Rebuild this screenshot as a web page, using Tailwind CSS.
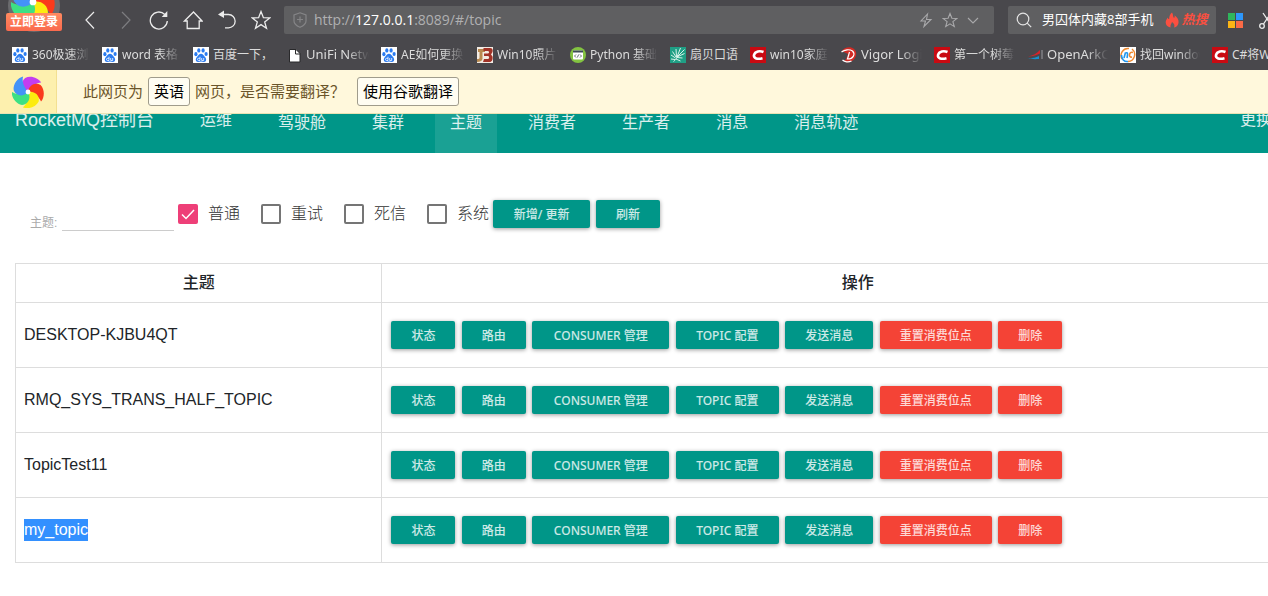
<!DOCTYPE html>
<html lang="zh-CN">
<head>
<meta charset="utf-8">
<title>RocketMQ控制台</title>
<script src="https://cdn.jsdelivr.net/npm/@tailwindcss/browser@4"></script>
</head>
<body class="min-h-screen overflow-x-hidden bg-white font-['Open_Sans','Noto_Sans_CJK_SC',sans-serif]">

<svg class="hidden" aria-hidden="true">
  <symbol id="pinwheel" viewBox="-17 -17 34 34">
    <path fill="#c33df0" d="M0 0C-7-3-8-11-3-15C3-18 11-15 14-10C9-10 4-6 0 0Z"/>
    <path fill="#fa3a1c" transform="rotate(72)" d="M0 0C-7-3-8-11-3-15C3-18 11-15 14-10C9-10 4-6 0 0Z"/>
    <path fill="#fcec10" transform="rotate(144)" d="M0 0C-7-3-8-11-3-15C3-18 11-15 14-10C9-10 4-6 0 0Z"/>
    <path fill="#3de084" transform="rotate(216)" d="M0 0C-7-3-8-11-3-15C3-18 11-15 14-10C9-10 4-6 0 0Z"/>
    <path fill="#4493f8" transform="rotate(288)" d="M0 0C-7-3-8-11-3-15C3-18 11-15 14-10C9-10 4-6 0 0Z"/>
    <circle r="2.6" fill="#fff"/>
  </symbol>
  <symbol id="paw" viewBox="0 0 16 16">
    <path fill="#fff" d="M0 0h16v16H0z"/>
    <g fill="#2a7bf0">
      <ellipse cx="2.9" cy="7.2" rx="1.6" ry="2.1"/><ellipse cx="5.8" cy="3.4" rx="1.6" ry="2.2"/>
      <ellipse cx="10.1" cy="3.4" rx="1.6" ry="2.2"/><ellipse cx="13.1" cy="7" rx="1.6" ry="2.1"/>
      <path d="M8 6.7c1.8 0 2.6 1.8 4 3.2 2 2 1.200 5-1 5-1.100 0-2-.4-3-.4s-2 .4-3 .4c-2.300 0-3.100-3-1-5 1.400-1.400 2.200-3.200 4-3.200z"/>
    </g>
    <path d="M7 9.700v3.800H5.600a1 1 0 0 1 0-2.200H7M8.700 11v2.500h2V11" fill="none" stroke="#fff" stroke-width=".8"/>
  </symbol>
  <symbol id="red-c" viewBox="0 0 16 16">
    <path fill="#c90a12" d="M0 0h16v16H0z"/>
    <path d="M13.500 5C10 3.500 5 4 4 8c-.6 3.500 3.500 4.500 8.500 3.200" fill="none" stroke="#fff" stroke-width="2.600"/>
  </symbol>
</svg>

<header class="bg-[#49484c] text-[#dcdcdc]">
  <div class="relative flex h-10 items-center overflow-hidden pl-[81px]">
    <div class="absolute left-[6px] -top-5 h-13 w-14">
      <div class="absolute left-[2px] top-0 size-13 rounded-full bg-[#6b6b6e]"></div>
      <svg class="absolute left-[5px] top-0 size-11"><use href="#pinwheel"/></svg>
      <button class="absolute top-[33px] left-0 h-[18px] w-14 rounded-xs bg-gradient-to-b from-[#ff8a60] to-[#fa6a4e] text-xs leading-[18px] font-bold text-white">立即登录</button>
    </div>
    <nav class="flex shrink-0 gap-[14px]" aria-label="浏览器">
      <button aria-label="后退"><svg class="size-5" viewBox="0 0 20 20" fill="none" stroke="#ececec" stroke-width="1.200"><path d="M13 2 5 10l8 8.500"/></svg></button>
      <button aria-label="前进"><svg class="size-5" viewBox="0 0 20 20" fill="none" stroke="#7d7d80" stroke-width="1.200"><path d="m7 2 8 8-8 8.500"/></svg></button>
      <button aria-label="刷新页面"><svg class="size-5" viewBox="0 0 20 20" fill="none" stroke="#ececec" stroke-width="1.300"><path d="M15.800 4.500A8.500 8.500 0 1 0 18.300 11"/><path d="M18.300 1v6h-5.600z" fill="#ececec" stroke="none"/></svg></button>
      <button aria-label="主页"><svg class="size-5" viewBox="0 0 20 20" fill="none" stroke="#ececec" stroke-width="1.300"><path d="m1.500 11 9-9 8.500 9h-2.800v7.500h-12V11z"/></svg></button>
      <button aria-label="撤销"><svg class="size-5" viewBox="0 0 20 20" fill="none" stroke="#ececec" stroke-width="1.300"><path d="M3 4.500h8.500a6.500 6.500 0 0 1 0 13.300H8"/><path d="M7 .5v7.500L1 4.500z" fill="#ececec" stroke="none"/></svg></button>
      <button aria-label="收藏夹"><svg class="size-5" viewBox="0 0 20 20" fill="none" stroke="#ececec" stroke-width="1.300"><path d="m10 1.500 2.400 6.200 6.300.2-5 4 1.800 6.300-5.500-3.600-5.500 3.600 1.800-6.300-5-4 6.300-.2z"/></svg></button>
    </nav>
    <div class="ml-[13px] flex h-7 grow items-center rounded-xs bg-[#5f5f61] pr-3 pl-2">
      <svg class="mr-[6px] size-4 shrink-0" viewBox="0 0 16 16" fill="none" stroke="#858587" stroke-width="1.200"><path d="M8 .8 14 3v6c0 3-3 5-6 6.300C5 14 2 12 2 9V3zM8 4.500v6M5 7.500h6"/></svg>
      <div class="grow text-sm text-[#b0b0b1]" role="textbox" aria-label="地址">http://<span class="text-white">127.0.0.1</span>:8089/#/topic</div>
      <div class="flex gap-2 text-[#a9a9ab]">
        <svg class="size-4" viewBox="0 0 16 16" fill="none" stroke="currentColor" stroke-width="1.100"><path d="M9.500 2 3 9h4.500L6 14.500 13 7.500H8.500z"/></svg>
        <svg class="size-4" viewBox="0 0 16 16" fill="none" stroke="currentColor" stroke-width="1.100"><path d="m8 1.500 1.900 4.800 5 .2-4 3.100 1.400 5L8 11.800l-4.300 2.800 1.400-5-4-3.100 5-.2z"/></svg>
        <svg class="size-4" viewBox="0 0 16 16" fill="none" stroke="currentColor" stroke-width="1.100"><path d="m2 6 5 5 5-5"/></svg>
      </div>
    </div>
    <div class="ml-[14px] flex h-7 w-52 shrink-0 items-center rounded-xs bg-[#5f5f61] pl-2">
      <svg class="mr-[10px] size-4 shrink-0" viewBox="0 0 16 16" fill="none" stroke="#e4e4e4" stroke-width="1.200"><circle cx="7" cy="7" r="5.800"/><path d="m11.200 11.200 4 4"/></svg>
      <span class="text-[13px] whitespace-nowrap text-white">男囚体内藏8部手机</span>
      <svg class="ml-3 h-4 w-[14px] shrink-0" viewBox="0 0 14 16" fill="#fa4f40"><path d="M7 .5c1.500 2 .5 4 2 5.500.8-.6.8-1.700.5-2.700C12.500 5.500 14 8 13.500 11c-.3 2.300-2 4-4.500 4.500 1-2 .2-4-2-5.500-.5 2-2 3-1.500 5.500C2.500 15 .7 13 .7 10.500.7 8.500 2 7 2.500 5.500 3 6.500 3.500 7 4.200 7 4 4.500 5 2 7 .5z"/></svg>
      <span class="ml-[2px] text-[13px] font-bold whitespace-nowrap text-[#fa4f40] italic">热搜</span>
    </div>
    <div class="ml-3 grid size-[15px] shrink-0 grid-cols-2 gap-px"><i class="bg-[#2fb65c]"></i><i class="bg-[#2d97fb]"></i><i class="bg-[#fdb515]"></i><i class="bg-[#fb6a46]"></i></div>
    <svg class="-mr-2 ml-4 size-[17px] shrink-0" viewBox="0 0 17 17" fill="none" stroke="#ececec" stroke-width="1.300"><circle cx="3" cy="14" r="2.300"/><circle cx="13" cy="14" r="2.300"/><path d="M4.500 12 12 1M11.500 12 4 1"/></svg>
  </div>

  <nav aria-label="书签" class="flex h-[30px] items-center gap-3 overflow-hidden pl-3 font-['Noto_Sans','Noto_Sans_CJK_SC',sans-serif] text-xs whitespace-nowrap [&>a]:flex [&>a]:shrink-0 [&>a]:items-center [&>a]:gap-1 [&_svg]:size-4 [&_svg]:shrink-0 [&_span]:overflow-hidden">
    <a href="#"><svg><use href="#paw"/></svg><span class="w-[58px] [mask-image:linear-gradient(to_right,#000_65%,transparent)]">360极速浏览</span></a>
    <a href="#"><svg><use href="#paw"/></svg><span class="w-[59px] [mask-image:linear-gradient(to_right,#000_65%,transparent)]">word 表格</span></a>
    <a href="#"><svg><use href="#paw"/></svg><span class="w-[61px]">百度一下，</span></a>
    <a href="#"><svg viewBox="0 0 16 16"><path d="M3.500 2.500h6.500l4 4v8.500H3.500z" fill="#fff" stroke="#29292b"/><path d="M9.500 2.500v4.500H14" fill="none" stroke="#29292b"/></svg><span class="w-[63px] text-[13px] [mask-image:linear-gradient(to_right,#000_65%,transparent)]">UniFi Network</span></a>
    <a href="#"><svg><use href="#paw"/></svg><span class="w-16 [mask-image:linear-gradient(to_right,#000_65%,transparent)]">AE如何更换</span></a>
    <a href="#"><svg viewBox="0 0 16 16"><path fill="#f3ece4" d="M0 0h16v16H0z"/><path d="M1 2h7v3H5.500v6.500c0 2-2 3.500-5.500 3.500v-3c2 0 2.500-.5 2.500-1.500V5H1z" fill="#b98a50"/><path fill-rule="evenodd" d="M6.500 1H13c2.500 0 3 2 2.500 4L14 7.500l1.500 2c.5 3-.5 5.500-3 5.500H6l1-3h4c1.500 0 1.500-3 0-3H7V6.500h4c1.500 0 1.500-2.500 0-2.500H6.500z" fill="#a23327"/></svg><span class="w-[61px] [mask-image:linear-gradient(to_right,#000_65%,transparent)]">Win10照片</span></a>
    <a href="#"><svg viewBox="0 0 16 16"><circle cx="8" cy="8" r="8" fill="#83c341"/><rect x="3" y="3.500" width="10" height="9" rx="1" fill="#fff"/><path d="M3 4.500h10" stroke="#3d4a57" stroke-width="2"/><path d="M6 7.500 4.500 9 6 10.500M10 7.500 11.500 9 10 10.500M8.700 7.500l-1.400 3" fill="none" stroke="#3d4a57" stroke-width=".8"/></svg><span class="w-[68px] [mask-image:linear-gradient(to_right,#000_65%,transparent)]">Python 基础</span></a>
    <a href="#"><svg viewBox="0 0 16 16"><path fill="#1f9f85" d="M0 0h16v16H0z"/><path d="M3.500 14.500c2-1.500 3-3 3.500-4.500L14.500 2.500M7 10 10.500 1M6.500 10 6 2M6 10 2.500 4.500M5.500 11 1 8M5 12.500 1 12M7 10l7.500-3.500M7 10.500l5.500.5M6 12l4.500 2" fill="none" stroke="#d8f3ea"/></svg><span class="w-12">扇贝口语</span></a>
    <a href="#"><svg><use href="#red-c"/></svg><span class="w-[59px] [mask-image:linear-gradient(to_right,#000_65%,transparent)]">win10家庭</span></a>
    <a href="#"><svg viewBox="0 0 16 16"><path d="M1 4C3 0 10-1 13 2c4 3 2 10-2 12-3 1.500-6 2-8 0 2-1 3-4 4-7z" fill="#d22a24"/><path d="M.5 5c3-2.500 8-3 11-1 3 3 1 8-5 8L8.500 5M1.500 13c2 2 6 2.500 9 1" fill="none" stroke="#fff" stroke-width="1.200"/></svg><span class="w-[61px] text-[13px] [mask-image:linear-gradient(to_right,#000_65%,transparent)]">Vigor Login</span></a>
    <a href="#"><svg><use href="#red-c"/></svg><span class="w-[61px] [mask-image:linear-gradient(to_right,#000_65%,transparent)]">第一个树莓派</span></a>
    <a href="#"><svg viewBox="0 0 16 16"><path d="M1 9.500c5-1 9-3 12-6.500v3.500c-4 2-8 3-12 3z" fill="#d6232a"/><path d="M0 11c4 .5 8 0 12-2v3c-4 .3-8 .3-12-1z" fill="#1691d0"/><path d="M15 3v9" stroke="#9b9ba0"/></svg><span class="w-[61px] text-[13px] [mask-image:linear-gradient(to_right,#000_65%,transparent)]">OpenArkCe</span></a>
    <a href="#"><svg viewBox="0 0 16 16"><path fill="#fff" d="M0 0h16v16H0z"/><path d="M2 12A7 7 0 0 1 9 1.500M12 2a7 7 0 0 1-4 12.500" fill="none" stroke="#f08a30" stroke-width="1.500"/><path d="M1.500 8C1.500 12 4 15 8 14.500M4 11l1.500-5.500M5.500 6c3-1 2 2 1.500 5" fill="none" stroke="#2296ee" stroke-width="1.600"/><path d="M13 5.500C9 4 8 11 12 10" fill="none" stroke="#f08a30" stroke-width="1.600"/></svg><span class="w-[60px] [mask-image:linear-gradient(to_right,#000_65%,transparent)]">找回windows</span></a>
    <a href="#"><svg><use href="#red-c"/></svg><span>C#将Word</span></a>
  </nav>
</header>

<section aria-label="翻译提示" class="relative z-10 flex h-11 items-stretch border-b border-[#e9e3b4] bg-[#fff8dc] text-[15px] text-[#6b552a]">
  <div class="flex w-[57px] items-center justify-center border-r border-[#f3e091] bg-[#fdf0ae]"><svg class="size-8"><use href="#pinwheel"/></svg></div>
  <div class="flex items-center gap-[5px] pl-[26px] whitespace-nowrap">
    <span>此网页为</span>
    <button class="h-[29px] rounded-[3px] border border-[#a09c8c] bg-[#fffdf2] px-[5px] text-black">英语</button>
    <span class="w-[157px]">网页，是否需要翻译？</span>
    <button class="h-[29px] rounded-[3px] border border-[#a09c8c] bg-[#fffdf2] px-[5px] text-black">使用谷歌翻译</button>
  </div>
</section>

<nav aria-label="主导航" class="-mt-[23px] flex h-[62px] items-stretch gap-4 overflow-hidden bg-[#009688] pl-[15px] font-['Liberation_Sans','Noto_Sans_CJK_SC',sans-serif] text-base whitespace-nowrap text-white/85 [&>a]:flex [&>a]:shrink-0 [&>a]:items-center">
  <a href="#" class="mr-[30px] pb-1 text-lg">RocketMQ控制台</a>
  <a href="#" class="mr-[15px] pb-1">运维</a>
  <a href="#" class="px-[15px] pt-[2px]">驾驶舱</a>
  <a href="#" class="px-[15px] pt-[2px]">集群</a>
  <a href="#" class="bg-white/10 px-[15px] pt-[2px]" aria-current="page">主题</a>
  <a href="#" class="px-[15px] pt-[2px]">消费者</a>
  <a href="#" class="px-[15px] pt-[2px]">生产者</a>
  <a href="#" class="px-[15px] pt-[2px]">消息</a>
  <a href="#" class="px-[15px] pt-[2px]">消息轨迹</a>
  <a href="#" class="-mr-9 ml-auto pb-1">更换语言</a>
</nav>

<main class="overflow-hidden pt-11 pb-8 pl-[15px] font-['Liberation_Sans','Noto_Sans_CJK_SC',sans-serif] text-base text-[#212529] [&_button]:h-7 [&_button]:rounded-xs [&_button]:px-5 [&_button]:pt-[2px] [&_button]:font-['Noto_Sans','Noto_Sans_CJK_SC',sans-serif] [&_button]:text-xs [&_button]:font-medium [&_button]:whitespace-nowrap [&_button]:text-white/80 [&_button]:shadow-[0_1px_4px_rgba(0,0,0,0.4)]">
  <form class="flex h-[34px] items-center pl-[15px] whitespace-nowrap">
    <label for="topic" class="w-8 pt-[18px] text-xs text-[#aaaaaa]">主题:</label>
    <input id="topic" type="text" class="mr-1 h-[34px] w-28 border-b border-[#cccccc] outline-none">
    <div class="mr-1 flex items-center gap-[21px] font-light text-[#333333] [&>label]:flex [&>label]:items-center [&>label]:gap-[10px]">
      <label><span class="grid size-5 *:col-start-1 *:row-start-1"><input type="checkbox" checked class="size-5 appearance-none rounded-xs bg-[#ee3f78]"><svg class="pointer-events-none size-5" viewBox="0 0 20 20" fill="none" stroke="#fff" stroke-width="1.500"><path d="m4 10.500 4 4 8-8.500"/></svg></span>普通</label>
      <label><input type="checkbox" class="size-5 appearance-none rounded-xs border-2 border-[#757575]">重试</label>
      <label><input type="checkbox" class="size-5 appearance-none rounded-xs border-2 border-[#757575]">死信</label>
      <label><input type="checkbox" class="size-5 appearance-none rounded-xs border-2 border-[#757575]">系统</label>
    </div>
    <button type="button" class="mr-[6px] min-w-[97px] bg-[#009688]">新增/ 更新</button>
    <button type="button" class="bg-[#009688]">刷新</button>
  </form>

  <div class="mt-8 -mr-[66px]">
    <table class="w-full table-fixed border-collapse [&_td]:h-[65px] [&_td]:border [&_td]:border-[#dddddd] [&_td]:px-2 [&_th]:h-[39px] [&_th]:border [&_th]:border-[#dddddd] [&_th]:font-medium">
      <thead>
        <tr><th class="w-[27.8%]" scope="col">主题</th><th scope="col">操作</th></tr>
      </thead>
      <tbody class="[&_button]:mr-[2px] [&_button:nth-child(3)]:min-w-[137px] [&_button:nth-child(4)]:min-w-[103px] [&_td:last-child]:pl-[9px] [&_td:last-child]:whitespace-nowrap">
        <tr>
          <td>DESKTOP-KJBU4QT</td>
          <td>
            <button class="bg-[#009688]">状态</button>
            <button class="bg-[#009688]">路由</button>
            <button class="bg-[#009688]">CONSUMER 管理</button>
            <button class="bg-[#009688]">TOPIC 配置</button>
            <button class="bg-[#009688]">发送消息</button>
            <button class="bg-[#f44336]">重置消费位点</button>
            <button class="bg-[#f44336]">删除</button>
          </td>
        </tr>
        <tr>
          <td>RMQ_SYS_TRANS_HALF_TOPIC</td>
          <td>
            <button class="bg-[#009688]">状态</button>
            <button class="bg-[#009688]">路由</button>
            <button class="bg-[#009688]">CONSUMER 管理</button>
            <button class="bg-[#009688]">TOPIC 配置</button>
            <button class="bg-[#009688]">发送消息</button>
            <button class="bg-[#f44336]">重置消费位点</button>
            <button class="bg-[#f44336]">删除</button>
          </td>
        </tr>
        <tr>
          <td>TopicTest11</td>
          <td>
            <button class="bg-[#009688]">状态</button>
            <button class="bg-[#009688]">路由</button>
            <button class="bg-[#009688]">CONSUMER 管理</button>
            <button class="bg-[#009688]">TOPIC 配置</button>
            <button class="bg-[#009688]">发送消息</button>
            <button class="bg-[#f44336]">重置消费位点</button>
            <button class="bg-[#f44336]">删除</button>
          </td>
        </tr>
        <tr>
          <td><span class="inline-block h-[22px] bg-[#3390ff] leading-[22px] text-white">my_topic</span></td>
          <td>
            <button class="bg-[#009688]">状态</button>
            <button class="bg-[#009688]">路由</button>
            <button class="bg-[#009688]">CONSUMER 管理</button>
            <button class="bg-[#009688]">TOPIC 配置</button>
            <button class="bg-[#009688]">发送消息</button>
            <button class="bg-[#f44336]">重置消费位点</button>
            <button class="bg-[#f44336]">删除</button>
          </td>
        </tr>
      </tbody>
    </table>
  </div>
</main>
</body>
</html>
